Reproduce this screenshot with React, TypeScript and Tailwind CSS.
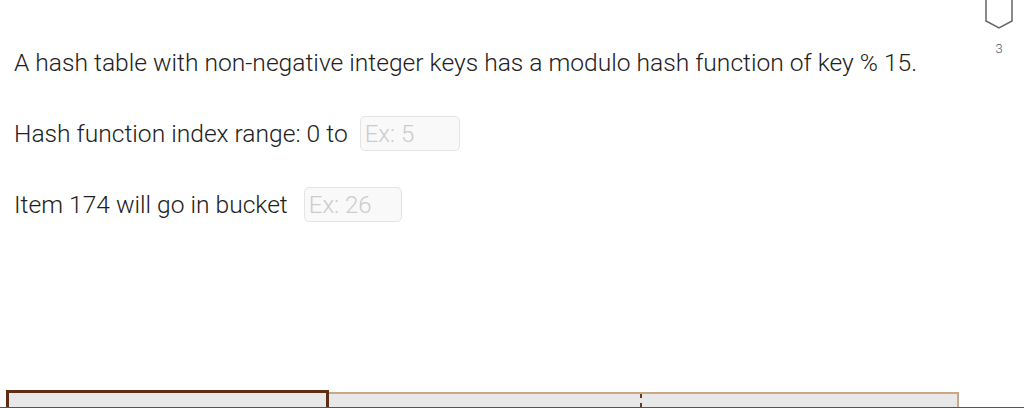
import React from 'react';

export default function App() {
  return (
    <div className="relative w-[1024px] h-[408px] overflow-hidden bg-white text-[#212121] font-['Roboto',sans-serif] font-light">
      {/* bookmark flag, top right */}
      <div className="absolute right-[10px] top-0 flex flex-col items-center">
        <svg width="30" height="30" viewBox="0 0 30 30" fill="none">
          <path d="M2 0 V21 L15 28 L28 21 V0" stroke="#666" strokeWidth="1.5" />
        </svg>
        <span className="text-[13px] text-[#555] mt-[12px] leading-none">3</span>
      </div>

      <div className="pt-[48px] pl-[14px] flex flex-col">
        <p className="text-[24.6px] leading-[30px]">
          A hash table with non-negative integer keys has a modulo hash function of key % 15.
        </p>

        <div className="mt-[38px] flex items-center gap-[12px]">
          <span className="text-[24.6px] leading-[30px]">Hash function index range: 0 to</span>
          <input
            className="w-[100px] h-[35px] px-[4px] rounded-[5px] border border-[#e4e4e4] bg-[#f9f9f9] text-[24px] font-light placeholder:text-[#cccccc] outline-none"
            placeholder="Ex: 5"
          />
        </div>

        <div className="mt-[36px] flex items-center gap-[16px]">
          <span className="text-[24.6px] leading-[30px]">Item 174 will go in bucket</span>
          <input
            className="w-[98px] h-[35px] px-[4px] rounded-[5px] border border-[#e4e4e4] bg-[#f9f9f9] text-[24px] font-light placeholder:text-[#cccccc] outline-none"
            placeholder="Ex: 26"
          />
        </div>
      </div>

      {/* tabs along the bottom */}
      <div className="absolute left-0 right-0 bottom-0 h-[18px] border-b border-[#555]">
        <div className="flex h-full pl-[6px] items-end">
          <div className="w-[323px] h-full border-t-[3px] border-x-[3px] border-[#5c2f14] bg-[#e8e8e8]" />
          <div className="w-[311px] h-[15px] border-t-[2px] border-[#c9a888] bg-[#e8e8e8]" />
          <div className="w-[2px] h-[15px] flex flex-col justify-between bg-[#e8e8e8] border-t-[2px] border-[#c9a888]">
            <div className="h-[4px] bg-[#6b3a1e]" />
            <div className="h-[4px] bg-[#6b3a1e]" />
          </div>
          <div className="w-[317px] h-[15px] border-t-[2px] border-r-[2px] border-[#c9a888] bg-[#e8e8e8]" />
        </div>
      </div>
    </div>
  );
}
